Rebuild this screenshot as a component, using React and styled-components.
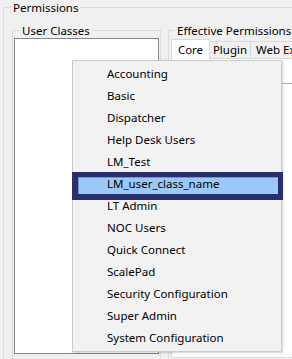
import styled, { createGlobalStyle } from "styled-components";

const GlobalStyle = createGlobalStyle`
  html, body {
    margin: 0;
    padding: 0;
    background: #f0f0f0;
  }
  * {
    box-sizing: border-box;
  }
`;

const Screen = styled.div`
  position: relative;
  width: 292px;
  height: 359px;
  overflow: hidden;
  padding: 7px 0 0 3px;
  background: #f0f0f0;
  font-family: "Noto Sans", "Open Sans", sans-serif;
  font-size: 11.5px;
  color: #000;
`;

// windows style group box, title sits over the top border
const Group = styled.section`
  flex: none;
  width: ${(p) => p.$width}px;
  height: ${(p) => p.$height}px;
  margin-top: ${(p) => p.$top || 0}px;
  border: 1px solid #dcdcdc;
  padding-left: ${(p) => p.$padLeft || 0}px;
`;

const GroupTitle = styled.div`
  width: fit-content;
  height: 14px;
  margin: -8px 0 0 ${(p) => p.$indent}px;
  padding: 0 2px;
  line-height: 15px;
  background: #f0f0f0;
  white-space: nowrap;
`;

const Columns = styled.div`
  display: flex;
  gap: 7px;
  margin-top: 9px;
`;

const ListBox = styled.div`
  height: 316px;
  margin-top: 1px;
  margin-right: 1px;
  background: #fff;
  border: 1px solid #828790;
`;

const TabRow = styled.div`
  display: flex;
  align-items: flex-end;
  height: 19px;
  margin-top: 2px;
  margin-left: 1px;
`;

const Tab = styled.div`
  position: relative;
  width: ${(p) => p.$w}px;
  flex: none;
  height: ${(p) => (p.$active ? 20 : 17)}px;
  margin-bottom: ${(p) => (p.$active ? -1 : 0)}px;
  z-index: ${(p) => (p.$active ? 1 : 0)};
  background: ${(p) => (p.$active ? "#fff" : "#f0f0f0")};
  border: 1px solid #d9d9d9;
  border-bottom: none;
  border-left: ${(p) => (p.$first ? "1px solid #d9d9d9" : "none")};
  display: flex;
  align-items: center;
  justify-content: ${(p) => (p.$clip ? "flex-start" : "center")};
  padding-left: ${(p) => (p.$clip ? 5 : 0)}px;
  white-space: nowrap;
  overflow: hidden;
  line-height: 14px;
`;

const TabPanel = styled.div`
  height: 300px;
  margin-left: 1px;
  background: #fff;
  border: 1px solid #d9d9d9;
  padding: 24px 0 0 4px;
`;

const PanelTree = styled.div`
  height: 260px;
  border-top: 1px solid #a9a9a9;
  border-left: 1px solid #a9a9a9;
`;

const Menu = styled.div`
  position: absolute;
  left: 72px;
  top: 60px;
  width: 210px;
  height: 292px;
  padding: 2px 0;
  background: #f2f2f2;
  border: 1px solid #cccccc;
  box-shadow: 1px 1px 2px rgba(0, 0, 0, 0.18);
  z-index: 5;
`;

const MenuItem = styled.div`
  position: relative;
  height: 22px;
  line-height: 22px;
  padding-left: 34px;
  white-space: nowrap;
  color: #000;
  background: ${(p) => (p.$selected ? "#99c9f4" : "transparent")};

  ${(p) =>
    p.$selected &&
    `
    &::after {
      content: "";
      position: absolute;
      top: -1px;
      left: -1px;
      right: -2px;
      bottom: -5px;
      border: 5px solid #2a2d6e;
      border-left-width: 6px;
      border-bottom-width: 6px;
      box-shadow: inset 1px 1px 0 rgba(30, 60, 110, 0.35);
      z-index: 2;
    }
  `}
`;

const items = [
  "Accounting",
  "Basic",
  "Dispatcher",
  "Help Desk Users",
  "LM_Test",
  "LM_user_class_name",
  "LT Admin",
  "NOC Users",
  "Quick Connect",
  "ScalePad",
  "Security Configuration",
  "Super Admin",
  "System Configuration",
];

const App = () => {
  return (
    <>
      <GlobalStyle />
      <Screen>
        <Group $width={420} $height={420} $padLeft={8}>
          <GroupTitle $indent={-1}>Permissions</GroupTitle>
          <Columns>
            <Group $width={149} $height={360} $top={7} $padLeft={1}>
              <GroupTitle $indent={6}>User Classes</GroupTitle>
              <ListBox />
            </Group>
            <Group $width={240} $height={360} $top={7} $padLeft={1}>
              <GroupTitle $indent={5}>Effective Permissions</GroupTitle>
              <TabRow>
                <Tab $active $first $w={39}>
                  Core
                </Tab>
                <Tab $w={41}>Plugin</Tab>
                <Tab $w={90} $clip>
                  Web Exceptions
                </Tab>
              </TabRow>
              <TabPanel>
                <PanelTree />
              </TabPanel>
            </Group>
          </Columns>
        </Group>
        <Menu>
          {items.map((name) => (
            <MenuItem key={name} $selected={name === "LM_user_class_name"}>
              {name}
            </MenuItem>
          ))}
        </Menu>
      </Screen>
    </>
  );
};

export default App;
